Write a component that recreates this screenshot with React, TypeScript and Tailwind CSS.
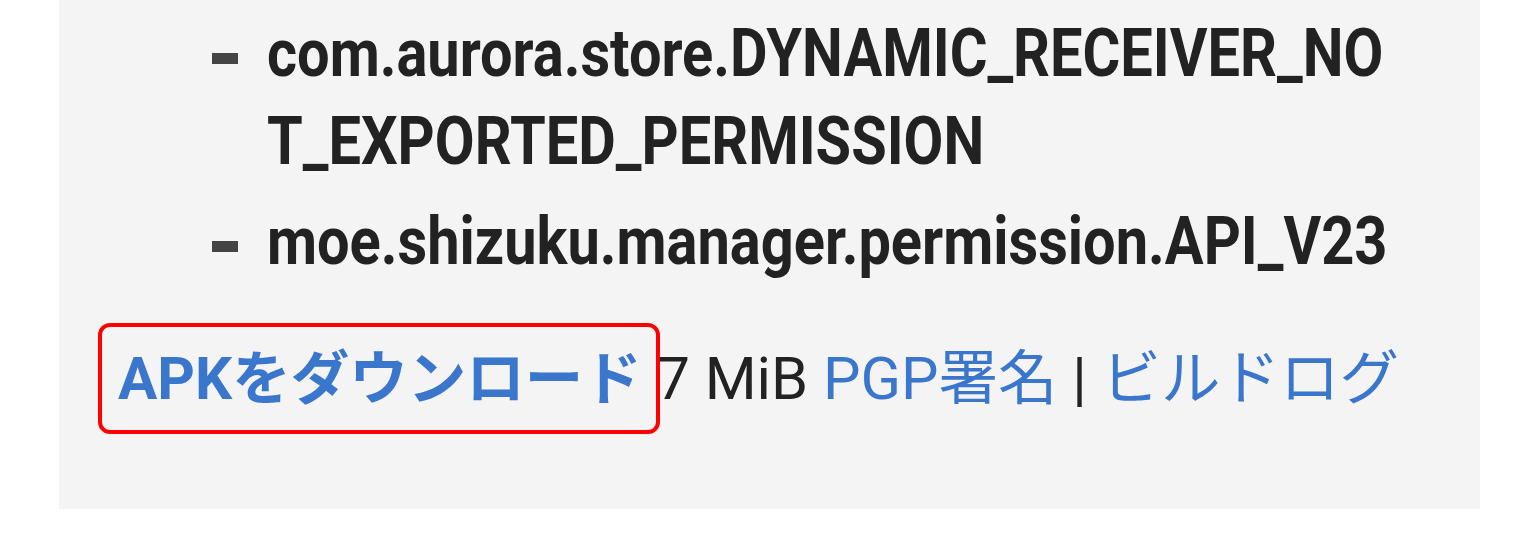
export default function App() {
  const items = [
    'com.aurora.store.DYNAMIC_RECEIVER_NOT_EXPORTED_PERMISSION',
    'moe.shizuku.manager.permission.API_V23',
  ];

  return (
    <div className="min-h-[543px] bg-white" style={{ fontFamily: 'Roboto, "Noto Sans CJK JP", sans-serif' }}>
      <div className="ml-[59px] w-[1421px] overflow-hidden bg-[#f4f4f4] pt-[10px] pb-[86px] pl-[59px] pr-[40px]">
        <ul className="pl-[149px]">
          {items.map((item) => (
            <li key={item} className="relative mb-[12px] text-[66px] font-bold leading-[88px] text-[#222]">
              <span className="absolute left-[-55px] top-[43px] h-[11px] w-[26px] bg-[#444]" />
              <span className="block w-[1300px] origin-left scale-x-[0.875] break-all">{item}</span>
            </li>
          ))}
        </ul>
        <div className="mt-[49px] text-[59.5px] leading-[88px] text-[#222]">
          <a href="#" className="relative text-[58.5px] font-bold text-[#3a77cc]">
            APKをダウンロード
            <span className="pointer-events-none absolute left-[-20px] right-[-18px] top-[-22px] bottom-[-21px] rounded-[12px] border-4 border-[#f00]" />
          </a>
          <span> 7 MiB </span>
          <a href="#" className="text-[#3a77cc]">PGP署名</a>
          <span> | </span>
          <a href="#" className="text-[#3a77cc]">ビルドログ</a>
        </div>
      </div>
    </div>
  );
}
